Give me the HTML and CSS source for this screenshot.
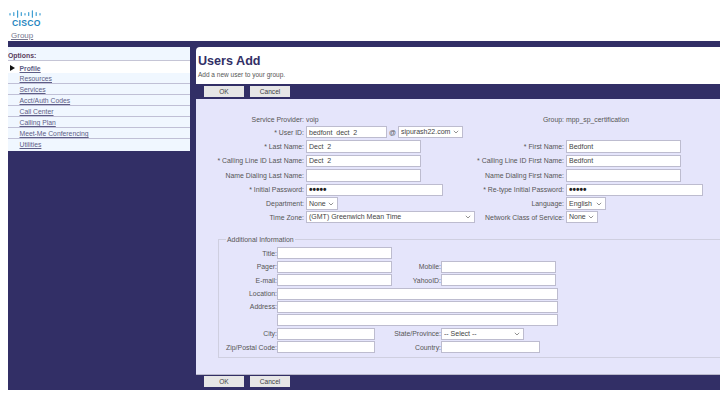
FILE: index.html
```html
<!DOCTYPE html>
<html>
<head lang="en">
    <meta charset="UTF-8">
    <title>Users Add</title>
    <link rel="stylesheet" href="styles.css">
</head>
<body>
<div class="top">
    <svg class="bars" width="32" height="8" viewBox="0 0 32 8">
        <g stroke="#3f9fd3" stroke-width="1.2" stroke-linecap="round">
            <path d="M1 3.500v1.500M4.800 2.500v3M8.600 0.800v6.400M12.300 2.500v3M16 3.500v1.500M19.700 2.500v3M23.400 0.800v6.400M27.200 2.500v3M31 3.500v1.500"/>
        </g>
    </svg>
    <div class="brand">CISCO</div>
    <a class="crumb" href="#">Group</a>
</div>
<div class="frame">
    <div class="side">
        <div class="side-title">Options:</div>
        <ul class="menu">
            <li class="current"><a href="#">Profile</a></li>
            <li><a href="#">Resources</a></li>
            <li><a href="#">Services</a></li>
            <li><a href="#">Acct/Auth Codes</a></li>
            <li><a href="#">Call Center</a></li>
            <li><a href="#">Calling Plan</a></li>
            <li><a href="#">Meet-Me Conferencing</a></li>
            <li><a href="#">Utilities</a></li>
        </ul>
    </div>
    <div class="main">
        <div class="head">
            <h1>Users Add</h1>
            <p>Add a new user to your group.</p>
        </div>
        <div class="bar">
            <button>OK</button>
            <button>Cancel</button>
        </div>
        <div class="form">
            <div class="row row-info">
                <div class="cell"><label>Service Provider:</label><span>voip</span></div>
                <div class="cell"><label>Group:</label><span>mpp_sp_certification</span></div>
            </div>
            <div class="row">
                <div class="cell"><label>* User ID:</label><input class="w80" value="bedfont_dect_2"><b class="at">@</b><select class="w65"><option>sipurash22.com</option></select></div>
            </div>
            <div class="row">
                <div class="cell"><label>* Last Name:</label><input class="w115" value="Dect_2"></div>
                <div class="cell"><label>* First Name:</label><input class="w115" value="Bedfont"></div>
            </div>
            <div class="row">
                <div class="cell"><label>* Calling Line ID Last Name:</label><input class="w115" value="Dect_2"></div>
                <div class="cell"><label>* Calling Line ID First Name:</label><input class="w115" value="Bedfont"></div>
            </div>
            <div class="row">
                <div class="cell"><label>Name Dialing Last Name:</label><input class="w115"></div>
                <div class="cell"><label>Name Dialing First Name:</label><input class="w115"></div>
            </div>
            <div class="row">
                <div class="cell"><label>* Initial Password:</label><input class="w137 pw" type="password" value="abcde"></div>
                <div class="cell"><label>* Re-type Initial Password:</label><input class="w137 pw" type="password" value="abcde"></div>
            </div>
            <div class="row row-tight">
                <div class="cell"><label>Department:</label><select class="w32"><option>None</option></select></div>
                <div class="cell"><label>Language:</label><select class="w40"><option>English</option></select></div>
            </div>
            <div class="row row-tight">
                <div class="cell"><label>Time Zone:</label><select class="w170"><option>(GMT) Greenwich Mean Time</option></select></div>
                <div class="cell"><label>Network Class of Service:</label><select class="w32"><option>None</option></select></div>
            </div>

            <fieldset class="extra">
                <legend>Additional Information</legend>
                <div class="xrow"><label>Title:</label><input class="w115"></div>
                <div class="xrow"><label>Pager:</label><input class="w115"><label class="lab2">Mobile:</label><input class="w115"></div>
                <div class="xrow"><label>E-mail:</label><input class="w115"><label class="lab2">YahooID:</label><input class="w115"></div>
                <div class="xrow"><label>Location:</label><input class="w281"></div>
                <div class="xrow"><label>Address:</label><input class="w281"></div>
                <div class="xrow"><label></label><input class="w281"></div>
                <div class="xrow"><label>City:</label><input class="w98"><label class="lab2 lab2-s">State/Province:</label><select class="w83"><option>-- Select --</option></select></div>
                <div class="xrow"><label>Zip/Postal Code:</label><input class="w98"><label class="lab2 lab2-s">Country:</label><input class="w99"></div>
            </fieldset>
        </div>
        <div class="bar bar-end">
            <button>OK</button>
            <button>Cancel</button>
        </div>
    </div>
</div>
</body>
</html>
```

FILE: styles.css
```css
body{
    margin: 0;
    padding: 0;
    background: #fff;
    font: 6.9px "Liberation Sans", Arial, sans-serif;
    color: #555;
    overflow: hidden;
}
a{
    color: #5d5d86;
}
.top{
    height: 41px;
    padding: 10px 0 0 9px;
    box-sizing: border-box;
}
.bars{
    display: block;
}
.brand{
    font: bold 8.600px/10px "Liberation Sans", Arial, sans-serif;
    letter-spacing: 0.3px;
    color: #1f86c0;
    margin-left: 3px;
}
.crumb{
    display: block;
    margin: 3px 0 0 2px;
    font-size: 8px;
    line-height: 9px;
    color: #77778f;
}
.frame{
    display: flex;
    height: 349px;
    margin-left: 8px;
    padding-top: 6px;
    box-sizing: border-box;
    background: #322f66;
}
.side{
    width: 182px;
    height: 104px;
    flex: none;
    margin-right: 6px;
    background: #f0f7ff;
}
.side-title{
    height: 14px;
    line-height: 18px;
    font-weight: bold;
    color: #5b3d5c;
    border-bottom: 1px solid #c5c5d6;
    box-sizing: border-box;
}
.menu{
    list-style-type: none;
    margin: 0;
    padding: 0;
}
.menu li{
    height: 11px;
    line-height: 12px;
    padding-left: 11.500px;
    font-size: 6.800px;
    border-bottom: 1.500px solid #c0c0d6;
    box-sizing: border-box;
    position: relative;
}
.menu li:last-child{
    border-bottom: 0;
}
.menu .current{
    height: 12px;
    line-height: 15px;
    background: #fff;
    border-bottom-color: #fff;
    font-weight: bold;
}
.menu .current:before{
    content: "";
    position: absolute;
    left: 2px;
    top: 4px;
    border-left: 5px solid #111;
    border-top: 3px solid transparent;
    border-bottom: 3px solid transparent;
}
.main{
    flex: 1;
    min-width: 0;
    display: flex;
    flex-direction: column;
    background: #fff;
    border-top-left-radius: 4px;
}
.head{
    height: 37px;
    padding: 6px 0 0 2px;
    box-sizing: border-box;
}
.head h1{
    margin: 0;
    font: bold 12.600px/16px "Liberation Sans", Arial, sans-serif;
    color: #322f66;
}
.head p{
    margin: 2px 0 0;
    font-size: 6.500px;
    line-height: 8px;
    color: #555;
}
.bar{
    display: flex;
    gap: 6px;
    height: 15px;
    padding: 2px 8px 0;
    box-sizing: border-box;
    background: #322f66;
}
.bar button{
    width: 40px;
    height: 11px;
    padding: 0;
    border: 0;
    background: #e6e6e6;
    font: 6.6px "Liberation Sans", Arial, sans-serif;
    color: #444;
}
.bar-end{
    height: 16px;
    border-top: 1px solid #b9b8cc;
    padding-top: 1px;
}
.form{
    flex: 1;
    padding-top: 14px;
    overflow: hidden;
    background: #e5e5fb;
    box-sizing: border-box;
}
.row{
    display: flex;
    height: 14.400px;
    align-items: center;
}
.row-info{
    height: 12px;
}
.row-tight{
    height: 13.400px;
}
.cell{
    display: flex;
    align-items: center;
    width: 260px;
    flex: none;
}
.cell label{
    width: 108px;
    flex: none;
    margin-right: 2px;
    text-align: right;
}
input, select{
    flex: none;
    height: 12.500px;
    padding: 0 2px;
    margin: 0;
    box-sizing: border-box;
    border: 1px solid #bdbccf;
    border-radius: 0;
    background: #fff;
    font: 7px/10px "Liberation Sans", Arial, sans-serif;
    color: #444;
    outline: 0;
}
select{
    appearance: none;
    background: #fff url("data:image/svg+xml,%3Csvg xmlns='http://www.w3.org/2000/svg' width='6' height='4'%3E%3Cpath d='M.8 .8L3 3L5.200 .8' fill='none' stroke='%23777' stroke-width='.8'/%3E%3C/svg%3E") no-repeat right 3px center;
}
.pw{
    font-size: 10px;
    font-weight: bold;
    color: #222;
}
.at{
    flex: none;
    width: 11px;
    text-align: center;
    font-weight: normal;
}
.w32{ width: 32px; }
.w40{ width: 40px; }
.w65{ width: 65px; }
.w80{ width: 81px; }
.w83{ width: 83px; }
.w98{ width: 98px; }
.w99{ width: 99px; }
.w115{ width: 115px; }
.w137{ width: 137px; }
.w170{ width: 169px; }
.w281{ width: 281px; }
.extra{
    margin: 12px 0 0 22px;
    width: 540px;
    height: 122px;
    padding: 3px 0 0;
    box-sizing: border-box;
    border: 1px solid #cfcfe0;
    border-right: 0;
}
.extra legend{
    margin-left: 7px;
    padding: 0 1px;
    line-height: 8px;
    color: #555;
}
.xrow{
    display: flex;
    align-items: center;
    height: 13.400px;
}
.xrow label{
    width: 58px;
    flex: none;
    text-align: right;
}
.xrow input, .xrow select{
    height: 12px;
}
.xrow .lab2{
    width: 49px;
}
.xrow .lab2-s{
    width: 66px;
}
```
